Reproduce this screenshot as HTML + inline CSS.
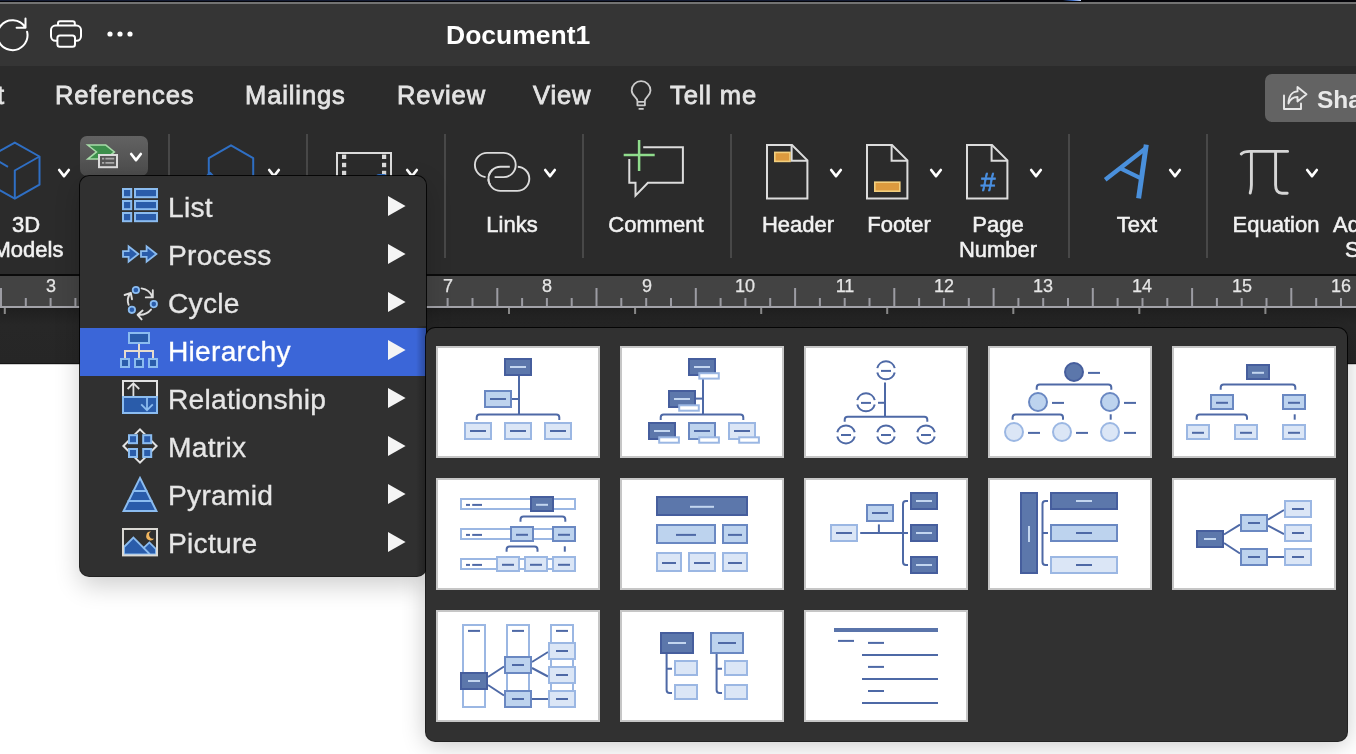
<!DOCTYPE html><html><head><meta charset="utf-8"><title>Document1</title><style>
*{margin:0;padding:0;box-sizing:border-box}
html,body{width:1356px;height:754px;overflow:hidden;background:#fff}
body{position:relative;font-family:"Liberation Sans", sans-serif}
.a{position:absolute}
.t{position:absolute;white-space:nowrap;will-change:transform}
.i{position:absolute;overflow:visible}
#titlebar{left:0;top:4px;width:1356px;height:62px;background:#353535}
#ribbon{left:0;top:66px;width:1356px;height:208px;background:#2b2b2b}
#ruler{left:0;top:276px;width:1356px;height:30px;background:#434343}
.sep{position:absolute;top:134px;width:2px;height:124px;background:#484848}
#menu{left:80px;top:176px;width:346px;height:400px;background:#303030;border-radius:9px;box-shadow:0 0 0 1px rgba(0,0,0,.85),0 9px 26px rgba(0,0,0,.2)}
#panelsh{left:426px;top:328px;width:920px;height:413px;border-radius:9px;box-shadow:0 3px 24px rgba(0,0,0,.24)}
#panel{left:426px;top:328px;width:920.5px;height:413px;background:#313131;border-radius:9px;box-shadow:0 0 0 1px rgba(0,0,0,.85)}
.th{position:absolute;width:164px;height:112px;background:#fff;border:2px solid #c6c6c6}
.th svg{position:absolute;left:-2px;top:-2px}
.d{fill:#5c77ab;stroke:#465e9d;stroke-width:2}
.m{fill:#bdd3ee;stroke:#6a88c2;stroke-width:2}
.l{fill:#dbe6f6;stroke:#9bb7e3;stroke-width:2}
.w{fill:#fff;stroke:#9bb7e3;stroke-width:2}
.ln{fill:none;stroke:#4e69a6;stroke-width:2}
.dl{fill:none;stroke:#c3d6ef;stroke-width:2}
.dd{fill:none;stroke:#4e69a6;stroke-width:2}
.chev{fill:none;stroke:#fff;stroke-width:2.7;stroke-linecap:round;stroke-linejoin:round}
</style></head><body>
<div class="a" style="left:0;top:0;width:1356px;height:2px;background:#05050a"></div>
<div class="a" style="left:0;top:0;width:1000px;height:1px;background:#141c33"></div>
<div class="a" style="left:1063px;top:0;width:17.5px;height:1px;background:linear-gradient(90deg,#05050a,#3b6fd0 55%,#cfe0ff)"></div>
<div class="a" style="left:0;top:2px;width:1356px;height:2px;background:#737373"></div>
<div id="titlebar" class="a"></div>
<svg class="i" style="left:0px;top:0px" width="150" height="65" viewBox="0 0 150 65" ><g fill="none" stroke="#fff" stroke-width="2" stroke-linecap="round" stroke-linejoin="round"><path d="M27.1 31.8A15 15 0 1 1 25.5 27.7M25.5 18.4V27.7H16.6"/><rect x="51" y="25.6" width="30" height="15.2" rx="4.5"/><path d="M58 25V23.2q0-2 2-2H72.8q2 0 2 2V25"/><rect x="57.4" y="35.4" width="17.6" height="11.4" rx="2.5" fill="#353535"/></g><circle cx="110" cy="34" r="2.6" fill="#fff"/><circle cx="120" cy="34" r="2.6" fill="#fff"/><circle cx="130" cy="34" r="2.6" fill="#fff"/></svg>
<div class="t" style="top:21.97px;font-size:26.5px;line-height:26.5px;color:#fff;font-weight:700;left:446px;">Document1</div>
<div id="ribbon" class="a"></div>
<div class="t" style="top:82.71px;font-size:25.5px;line-height:25.5px;color:#e4e4e4;-webkit-text-stroke:0.8px #e4e4e4;left:-596px;width:600px;text-align:right;">Insert</div>
<div class="t" style="top:82.71px;font-size:25.5px;line-height:25.5px;color:#e4e4e4;letter-spacing:0.9px;-webkit-text-stroke:0.8px #e4e4e4;left:54.6px;">References</div>
<div class="t" style="top:82.71px;font-size:25.5px;line-height:25.5px;color:#e4e4e4;letter-spacing:0.9px;-webkit-text-stroke:0.8px #e4e4e4;left:244.6px;">Mailings</div>
<div class="t" style="top:82.71px;font-size:25.5px;line-height:25.5px;color:#e4e4e4;letter-spacing:0.9px;-webkit-text-stroke:0.8px #e4e4e4;left:396.8px;">Review</div>
<div class="t" style="top:82.71px;font-size:25.5px;line-height:25.5px;color:#e4e4e4;letter-spacing:0.9px;-webkit-text-stroke:0.8px #e4e4e4;left:533px;">View</div>
<div class="t" style="top:82.71px;font-size:25.5px;line-height:25.5px;color:#e4e4e4;letter-spacing:0.9px;-webkit-text-stroke:0.8px #e4e4e4;left:670.3px;">Tell me</div>
<svg class="i" style="left:629px;top:79px" width="24" height="32" viewBox="0 0 24 32" ><g fill="none" stroke="#cbcbcb" stroke-width="1.8" stroke-linejoin="round"><path d="M8.4 26.3V21.8C8.4 18.4 2.7 16.8 2.7 11.5A9.4 9.4 0 0 1 21.5 11.5C21.5 16.8 15.9 18.4 15.9 21.8V26.3Z"/><path d="M8.4 22.9H15.9M9.6 29.8H14.7"/></g></svg>
<div class="a" style="left:1265px;top:74px;width:110px;height:48px;background:#636363;border-radius:7px"></div>
<svg class="i" style="left:1283px;top:86px" width="25" height="24" viewBox="0 0 25 24" ><g fill="none" stroke="#e8e8e8" stroke-width="1.9" stroke-linejoin="round" stroke-linecap="round"><path d="M1 9.5V23H18V17.5"/><path d="M14.5 1L23.5 8.2L14.5 15.4V11C9.5 11 7 13.5 5.5 17.5C5.5 10 9 5.6 14.5 5.4Z"/></g></svg>
<div class="t" style="top:87.76px;font-size:24.5px;line-height:24.5px;color:#e9e9e9;font-weight:700;left:1317.4px;">Share</div>
<div class="sep" style="left:168px"></div>
<div class="sep" style="left:306px"></div>
<div class="sep" style="left:444px"></div>
<div class="sep" style="left:582px"></div>
<div class="sep" style="left:730px"></div>
<div class="sep" style="left:1068px"></div>
<div class="sep" style="left:1206px"></div>
<svg class="i" style="left:0px;top:130px" width="44" height="72" viewBox="0 0 44 72" ><g fill="none" stroke="#2f6fc4" stroke-width="2" stroke-linejoin="round"><path d="M14.8 12.6L39.5 26.5V54.7L14.8 68.7L-9.9 54.7V26.5Z"/><path d="M39.5 26.5L14.8 40.5V68.7M-9.9 26.5L8 36.8"/></g></svg>
<svg class="i" style="left:56px;top:167.2px" width="16" height="12" viewBox="-8 -6 16 12"><path class="chev" d="M-4.8 -3L0 3.1L4.8 -3"/></svg>
<div class="t" style="top:214.18px;font-size:22px;line-height:22px;color:#f2f2f2;-webkit-text-stroke:0.55px #f2f2f2;left:-274px;width:600px;text-align:center;">3D</div>
<div class="t" style="top:238.68px;font-size:22px;line-height:22px;color:#f2f2f2;-webkit-text-stroke:0.55px #f2f2f2;left:-272.5px;width:600px;text-align:center;">Models</div>
<div class="a" style="left:80px;top:136px;width:68px;height:39.6px;border-radius:7px;background:linear-gradient(#626262,#4b4b4b)"></div>
<svg class="i" style="left:80px;top:136px" width="68" height="40" viewBox="0 0 68 40" ><path d="M7.7 9.1H25.8L34.4 15.9L25.8 23.1H7.7L16.5 15.9Z" fill="#3d8f4c" stroke="#a6dba8" stroke-width="1.5" stroke-linejoin="miter"/><rect x="19" y="19" width="18" height="12.2" fill="#565656" stroke="#dcdcdc" stroke-width="2"/><path d="M22 22.7h2.2M25.4 22.7h8.8M22 26.9h2.2M25.4 26.9h8.8" stroke="#a9a9a9" stroke-width="1.8"/></svg>
<svg class="i" style="left:128px;top:151.2px" width="16" height="12" viewBox="-8 -6 16 12"><path class="chev" d="M-4.8 -3L0 3.1L4.8 -3"/></svg>
<svg class="i" style="left:208px;top:143.7px" width="48" height="56" viewBox="0 0 48 56" ><g fill="none" stroke="#2f6fc4" stroke-width="2" stroke-linejoin="round"><path d="M23 1.3L45.2 14.2V40L23 53L0.8 40V14.2Z"/><path d="M-2.5 33.6L2 28.8L6.5 33.6Z"/></g></svg>
<svg class="i" style="left:266px;top:167.2px" width="16" height="12" viewBox="-8 -6 16 12"><path class="chev" d="M-4.8 -3L0 3.1L4.8 -3"/></svg>
<svg class="i" style="left:336px;top:152.2px" width="56" height="44" viewBox="0 0 56 44" ><rect x="1" y="1" width="54" height="40" fill="none" stroke="#dcdcdc" stroke-width="2"/><rect x="6" y="2.6" width="4.2" height="4.4" fill="#dcdcdc"/><rect x="46" y="2.6" width="4.2" height="4.4" fill="#dcdcdc"/><rect x="6" y="10.8" width="4.2" height="4.4" fill="#dcdcdc"/><rect x="46" y="10.8" width="4.2" height="4.4" fill="#dcdcdc"/><rect x="6" y="18.8" width="4.2" height="4.4" fill="#dcdcdc"/><rect x="46" y="18.8" width="4.2" height="4.4" fill="#dcdcdc"/><rect x="6" y="27" width="4.2" height="4.4" fill="#dcdcdc"/><rect x="46" y="27" width="4.2" height="4.4" fill="#dcdcdc"/><rect x="40" y="22" width="11" height="12" rx="3" fill="#2f6fc4"/></svg>
<svg class="i" style="left:404px;top:167.2px" width="16" height="12" viewBox="-8 -6 16 12"><path class="chev" d="M-4.8 -3L0 3.1L4.8 -3"/></svg>
<svg class="i" style="left:474px;top:152px" width="58" height="42" viewBox="0 0 58 42" ><g fill="none" stroke="#dcdcdc" stroke-width="1.9"><rect x="14.4" y="14.7" width="40.9" height="24.2" rx="12.1"/><path d="M35.8 14.7H43.8" stroke="#2b2b2b" stroke-width="3.4"/><rect x="0.9" y="0.9" width="40.8" height="24.2" rx="12.1"/><path d="M11.6 25.1H20.6" stroke="#2b2b2b" stroke-width="3.4"/><path d="M16.02 32.85A12.1 12.1 0 0 1 18.72 17.53"/></g></svg>
<svg class="i" style="left:542px;top:167.2px" width="16" height="12" viewBox="-8 -6 16 12"><path class="chev" d="M-4.8 -3L0 3.1L4.8 -3"/></svg>
<div class="t" style="top:214.18px;font-size:22px;line-height:22px;color:#f2f2f2;-webkit-text-stroke:0.55px #f2f2f2;left:212px;width:600px;text-align:center;">Links</div>
<svg class="i" style="left:620px;top:138px" width="66" height="62" viewBox="0 0 66 62" ><path d="M9.3 21V44.8H15.5V57.6L27.9 44.8H62.9V9.3H23.2" fill="none" stroke="#dcdcdc" stroke-width="2"/><path d="M3.7 17.1H34.7M19.1 1.9V32.9" stroke="#8fdc8c" stroke-width="2.5" fill="none"/></svg>
<div class="t" style="top:214.18px;font-size:22px;line-height:22px;color:#f2f2f2;-webkit-text-stroke:0.55px #f2f2f2;left:356px;width:600px;text-align:center;">Comment</div>
<svg class="i" style="left:766px;top:144px" width="43" height="56" viewBox="0 0 43 56" ><path d="M1 1H26L41.4 16.4V54.4H1Z" fill="none" stroke="#dcdcdc" stroke-width="2" stroke-linejoin="miter"/><path d="M25.6 1V16.8H41.4" fill="none" stroke="#dcdcdc" stroke-width="2"/><rect x="8.8" y="8.4" width="15.2" height="9" fill="#dc9a3e" stroke="#f2cf7e" stroke-width="1.6"/></svg>
<svg class="i" style="left:866px;top:144px" width="43" height="56" viewBox="0 0 43 56" ><path d="M1 1H26L41.4 16.4V54.4H1Z" fill="none" stroke="#dcdcdc" stroke-width="2" stroke-linejoin="miter"/><path d="M25.6 1V16.8H41.4" fill="none" stroke="#dcdcdc" stroke-width="2"/><rect x="8.8" y="38.2" width="25" height="9" fill="#dc9a3e" stroke="#f2cf7e" stroke-width="1.6"/></svg>
<svg class="i" style="left:966px;top:144px" width="43" height="56" viewBox="0 0 43 56" ><path d="M1 1H26L41.4 16.4V54.4H1Z" fill="none" stroke="#dcdcdc" stroke-width="2" stroke-linejoin="miter"/><path d="M25.6 1V16.8H41.4" fill="none" stroke="#dcdcdc" stroke-width="2"/></svg>
<div class="t" style="top:168.87px;font-size:26.5px;line-height:26.5px;color:#4a90e2;-webkit-text-stroke:0.7px #4a90e2;left:687.8px;width:600px;text-align:center;">#</div>
<svg class="i" style="left:828px;top:167.2px" width="16" height="12" viewBox="-8 -6 16 12"><path class="chev" d="M-4.8 -3L0 3.1L4.8 -3"/></svg>
<svg class="i" style="left:928px;top:167.2px" width="16" height="12" viewBox="-8 -6 16 12"><path class="chev" d="M-4.8 -3L0 3.1L4.8 -3"/></svg>
<svg class="i" style="left:1028px;top:167.2px" width="16" height="12" viewBox="-8 -6 16 12"><path class="chev" d="M-4.8 -3L0 3.1L4.8 -3"/></svg>
<div class="t" style="top:214.18px;font-size:22px;line-height:22px;color:#f2f2f2;-webkit-text-stroke:0.55px #f2f2f2;left:498px;width:600px;text-align:center;">Header</div>
<div class="t" style="top:214.18px;font-size:22px;line-height:22px;color:#f2f2f2;-webkit-text-stroke:0.55px #f2f2f2;left:598.5px;width:600px;text-align:center;">Footer</div>
<div class="t" style="top:214.18px;font-size:22px;line-height:22px;color:#f2f2f2;-webkit-text-stroke:0.55px #f2f2f2;left:698px;width:600px;text-align:center;">Page</div>
<div class="t" style="top:238.68px;font-size:22px;line-height:22px;color:#f2f2f2;-webkit-text-stroke:0.55px #f2f2f2;left:698px;width:600px;text-align:center;">Number</div>
<svg class="i" style="left:1102px;top:142px" width="50" height="60" viewBox="0 0 50 60" ><g stroke="#4a90dc" fill="none"><path d="M44.3 2.6L36.6 56.4" stroke-width="5"/><path d="M3.2 37.8L43.5 6.5" stroke-width="4.3"/><path d="M18.5 26.4L39.5 36.6" stroke-width="4"/></g></svg>
<svg class="i" style="left:1166.5px;top:167.2px" width="16" height="12" viewBox="-8 -6 16 12"><path class="chev" d="M-4.8 -3L0 3.1L4.8 -3"/></svg>
<div class="t" style="top:214.18px;font-size:22px;line-height:22px;color:#f2f2f2;-webkit-text-stroke:0.55px #f2f2f2;left:837px;width:600px;text-align:center;">Text</div>
<svg class="i" style="left:1240px;top:149px" width="50" height="47" viewBox="0 0 50 47" ><g fill="none" stroke="#d6d6d6" stroke-width="2.9" stroke-linecap="round"><path d="M1.2 5C3.5 2.4 6 2.4 10 2.4H47.6"/><path d="M11.4 2.6V36C11.4 40 10.8 42 10.2 44"/><path d="M35.6 2.6V36C35.6 42 38.4 44.2 42 44.2H47.2"/></g></svg>
<svg class="i" style="left:1304px;top:167.2px" width="16" height="12" viewBox="-8 -6 16 12"><path class="chev" d="M-4.8 -3L0 3.1L4.8 -3"/></svg>
<div class="t" style="top:214.18px;font-size:22px;line-height:22px;color:#f2f2f2;-webkit-text-stroke:0.55px #f2f2f2;left:976px;width:600px;text-align:center;">Equation</div>
<div class="t" style="top:214.18px;font-size:22px;line-height:22px;color:#f2f2f2;-webkit-text-stroke:0.55px #f2f2f2;left:1332.5px;">Advanced</div>
<div class="t" style="top:238.68px;font-size:22px;line-height:22px;color:#f2f2f2;-webkit-text-stroke:0.55px #f2f2f2;left:1344.5px;">Symbol</div>
<div class="a" style="left:0;top:274px;width:1356px;height:2px;background:#0b0b0b"></div>
<div id="ruler" class="a"></div>
<div class="a" style="left:0;top:306px;width:1356px;height:2px;background:#a2a2a8"></div>
<div class="a" style="left:0;top:308px;width:1356px;height:56px;background:linear-gradient(#1f1f1f,#272727 30%,#262626)"></div>
<div class="a" style="left:0;top:363px;width:1356px;height:1px;background:#161616"></div>
<div class="a" style="left:0;top:364px;width:1356px;height:1px;background:#cfcfcf"></div>
<svg class="i" style="left:0px;top:276px" width="1356" height="40" viewBox="0 0 1356 40" ><rect x="-0.0" y="12" width="2" height="18" fill="#9c9ca3"/><rect x="24.8" y="22" width="2" height="8" fill="#9c9ca3"/><rect x="49.6" y="22" width="2" height="8" fill="#9c9ca3"/><rect x="74.4" y="22" width="2" height="8" fill="#9c9ca3"/><rect x="99.2" y="12" width="2" height="18" fill="#9c9ca3"/><rect x="124.0" y="22" width="2" height="8" fill="#9c9ca3"/><rect x="148.9" y="22" width="2" height="8" fill="#9c9ca3"/><rect x="173.7" y="22" width="2" height="8" fill="#9c9ca3"/><rect x="198.5" y="12" width="2" height="18" fill="#9c9ca3"/><rect x="223.3" y="22" width="2" height="8" fill="#9c9ca3"/><rect x="248.1" y="22" width="2" height="8" fill="#9c9ca3"/><rect x="272.9" y="22" width="2" height="8" fill="#9c9ca3"/><rect x="297.8" y="12" width="2" height="18" fill="#9c9ca3"/><rect x="322.6" y="22" width="2" height="8" fill="#9c9ca3"/><rect x="347.4" y="22" width="2" height="8" fill="#9c9ca3"/><rect x="372.2" y="22" width="2" height="8" fill="#9c9ca3"/><rect x="397.0" y="12" width="2" height="18" fill="#9c9ca3"/><rect x="421.8" y="22" width="2" height="8" fill="#9c9ca3"/><rect x="446.6" y="22" width="2" height="8" fill="#9c9ca3"/><rect x="471.5" y="22" width="2" height="8" fill="#9c9ca3"/><rect x="496.3" y="12" width="2" height="18" fill="#9c9ca3"/><rect x="521.1" y="22" width="2" height="8" fill="#9c9ca3"/><rect x="545.9" y="22" width="2" height="8" fill="#9c9ca3"/><rect x="570.7" y="22" width="2" height="8" fill="#9c9ca3"/><rect x="595.5" y="12" width="2" height="18" fill="#9c9ca3"/><rect x="620.3" y="22" width="2" height="8" fill="#9c9ca3"/><rect x="645.2" y="22" width="2" height="8" fill="#9c9ca3"/><rect x="670.0" y="22" width="2" height="8" fill="#9c9ca3"/><rect x="694.8" y="12" width="2" height="18" fill="#9c9ca3"/><rect x="719.6" y="22" width="2" height="8" fill="#9c9ca3"/><rect x="744.4" y="22" width="2" height="8" fill="#9c9ca3"/><rect x="769.2" y="22" width="2" height="8" fill="#9c9ca3"/><rect x="794.1" y="12" width="2" height="18" fill="#9c9ca3"/><rect x="818.9" y="22" width="2" height="8" fill="#9c9ca3"/><rect x="843.7" y="22" width="2" height="8" fill="#9c9ca3"/><rect x="868.5" y="22" width="2" height="8" fill="#9c9ca3"/><rect x="893.3" y="12" width="2" height="18" fill="#9c9ca3"/><rect x="918.1" y="22" width="2" height="8" fill="#9c9ca3"/><rect x="942.9" y="22" width="2" height="8" fill="#9c9ca3"/><rect x="967.8" y="22" width="2" height="8" fill="#9c9ca3"/><rect x="992.6" y="12" width="2" height="18" fill="#9c9ca3"/><rect x="1017.4" y="22" width="2" height="8" fill="#9c9ca3"/><rect x="1042.2" y="22" width="2" height="8" fill="#9c9ca3"/><rect x="1067.0" y="22" width="2" height="8" fill="#9c9ca3"/><rect x="1091.8" y="12" width="2" height="18" fill="#9c9ca3"/><rect x="1116.6" y="22" width="2" height="8" fill="#9c9ca3"/><rect x="1141.5" y="22" width="2" height="8" fill="#9c9ca3"/><rect x="1166.3" y="22" width="2" height="8" fill="#9c9ca3"/><rect x="1191.1" y="12" width="2" height="18" fill="#9c9ca3"/><rect x="1215.9" y="22" width="2" height="8" fill="#9c9ca3"/><rect x="1240.7" y="22" width="2" height="8" fill="#9c9ca3"/><rect x="1265.5" y="22" width="2" height="8" fill="#9c9ca3"/><rect x="1290.3" y="12" width="2" height="18" fill="#9c9ca3"/><rect x="1315.2" y="22" width="2" height="8" fill="#9c9ca3"/><rect x="1340.0" y="22" width="2" height="8" fill="#9c9ca3"/><rect x="3.8" y="32" width="2" height="6" fill="#8a8a8a"/><rect x="129.9" y="32" width="2" height="6" fill="#8a8a8a"/><rect x="255.9" y="32" width="2" height="6" fill="#8a8a8a"/><rect x="382.0" y="32" width="2" height="6" fill="#8a8a8a"/><rect x="508.0" y="32" width="2" height="6" fill="#8a8a8a"/><rect x="634.1" y="32" width="2" height="6" fill="#8a8a8a"/><rect x="760.2" y="32" width="2" height="6" fill="#8a8a8a"/><rect x="886.2" y="32" width="2" height="6" fill="#8a8a8a"/><rect x="1012.3" y="32" width="2" height="6" fill="#8a8a8a"/><rect x="1138.3" y="32" width="2" height="6" fill="#8a8a8a"/><rect x="1264.4" y="32" width="2" height="6" fill="#8a8a8a"/></svg>
<div class="t" style="top:276.66px;font-size:18px;line-height:18px;color:#e6e6e6;-webkit-text-stroke:0.25px #e6e6e6;left:-248.9px;width:600px;text-align:center;">3</div>
<div class="t" style="top:276.66px;font-size:18px;line-height:18px;color:#e6e6e6;-webkit-text-stroke:0.25px #e6e6e6;left:-149.64px;width:600px;text-align:center;">4</div>
<div class="t" style="top:276.66px;font-size:18px;line-height:18px;color:#e6e6e6;-webkit-text-stroke:0.25px #e6e6e6;left:-50.379999999999995px;width:600px;text-align:center;">5</div>
<div class="t" style="top:276.66px;font-size:18px;line-height:18px;color:#e6e6e6;-webkit-text-stroke:0.25px #e6e6e6;left:48.88000000000005px;width:600px;text-align:center;">6</div>
<div class="t" style="top:276.66px;font-size:18px;line-height:18px;color:#e6e6e6;-webkit-text-stroke:0.25px #e6e6e6;left:148.14000000000004px;width:600px;text-align:center;">7</div>
<div class="t" style="top:276.66px;font-size:18px;line-height:18px;color:#e6e6e6;-webkit-text-stroke:0.25px #e6e6e6;left:247.39999999999998px;width:600px;text-align:center;">8</div>
<div class="t" style="top:276.66px;font-size:18px;line-height:18px;color:#e6e6e6;-webkit-text-stroke:0.25px #e6e6e6;left:346.6600000000001px;width:600px;text-align:center;">9</div>
<div class="t" style="top:276.66px;font-size:18px;line-height:18px;color:#e6e6e6;-webkit-text-stroke:0.25px #e6e6e6;left:445.4200000000001px;width:600px;text-align:center;">10</div>
<div class="t" style="top:276.66px;font-size:18px;line-height:18px;color:#e6e6e6;-webkit-text-stroke:0.25px #e6e6e6;left:544.6800000000001px;width:600px;text-align:center;">11</div>
<div class="t" style="top:276.66px;font-size:18px;line-height:18px;color:#e6e6e6;-webkit-text-stroke:0.25px #e6e6e6;left:643.94px;width:600px;text-align:center;">12</div>
<div class="t" style="top:276.66px;font-size:18px;line-height:18px;color:#e6e6e6;-webkit-text-stroke:0.25px #e6e6e6;left:743.2px;width:600px;text-align:center;">13</div>
<div class="t" style="top:276.66px;font-size:18px;line-height:18px;color:#e6e6e6;-webkit-text-stroke:0.25px #e6e6e6;left:842.46px;width:600px;text-align:center;">14</div>
<div class="t" style="top:276.66px;font-size:18px;line-height:18px;color:#e6e6e6;-webkit-text-stroke:0.25px #e6e6e6;left:941.72px;width:600px;text-align:center;">15</div>
<div class="t" style="top:276.66px;font-size:18px;line-height:18px;color:#e6e6e6;-webkit-text-stroke:0.25px #e6e6e6;left:1040.98px;width:600px;text-align:center;">16</div>
<div id="panelsh" class="a"></div>
<div id="menu" class="a">
<div class="a" style="left:0;top:152px;width:346px;height:48px;background:#3b66d8"></div>
<div class="a" style="left:336px;top:150px;width:10px;height:250px;background:linear-gradient(90deg,rgba(0,0,0,0),rgba(0,0,0,.28));border-radius:0 0 9px 0"></div>
</div>
<div class="t" style="top:193.13px;font-size:28.2px;line-height:28.2px;color:#e6e6e6;letter-spacing:0.25px;-webkit-text-stroke:0.32px #e6e6e6;left:168px;">List</div>
<svg class="i" style="left:388px;top:196px" width="18" height="20" viewBox="0 0 18 20"><path d="M0 0L17.6 10L0 20Z" fill="#f4f4f4"/></svg>
<div class="t" style="top:241.13px;font-size:28.2px;line-height:28.2px;color:#e6e6e6;letter-spacing:0.25px;-webkit-text-stroke:0.32px #e6e6e6;left:168px;">Process</div>
<svg class="i" style="left:388px;top:244px" width="18" height="20" viewBox="0 0 18 20"><path d="M0 0L17.6 10L0 20Z" fill="#f4f4f4"/></svg>
<div class="t" style="top:289.13px;font-size:28.2px;line-height:28.2px;color:#e6e6e6;letter-spacing:0.25px;-webkit-text-stroke:0.32px #e6e6e6;left:168px;">Cycle</div>
<svg class="i" style="left:388px;top:292px" width="18" height="20" viewBox="0 0 18 20"><path d="M0 0L17.6 10L0 20Z" fill="#f4f4f4"/></svg>
<div class="t" style="top:337.13px;font-size:28.2px;line-height:28.2px;color:#fff;letter-spacing:0.25px;-webkit-text-stroke:0.32px #fff;left:168px;">Hierarchy</div>
<svg class="i" style="left:388px;top:340px" width="18" height="20" viewBox="0 0 18 20"><path d="M0 0L17.6 10L0 20Z" fill="#f4f4f4"/></svg>
<div class="t" style="top:385.13px;font-size:28.2px;line-height:28.2px;color:#e6e6e6;letter-spacing:0.25px;-webkit-text-stroke:0.32px #e6e6e6;left:168px;">Relationship</div>
<svg class="i" style="left:388px;top:388px" width="18" height="20" viewBox="0 0 18 20"><path d="M0 0L17.6 10L0 20Z" fill="#f4f4f4"/></svg>
<div class="t" style="top:433.13px;font-size:28.2px;line-height:28.2px;color:#e6e6e6;letter-spacing:0.25px;-webkit-text-stroke:0.32px #e6e6e6;left:168px;">Matrix</div>
<svg class="i" style="left:388px;top:436px" width="18" height="20" viewBox="0 0 18 20"><path d="M0 0L17.6 10L0 20Z" fill="#f4f4f4"/></svg>
<div class="t" style="top:481.13px;font-size:28.2px;line-height:28.2px;color:#e6e6e6;letter-spacing:0.25px;-webkit-text-stroke:0.32px #e6e6e6;left:168px;">Pyramid</div>
<svg class="i" style="left:388px;top:484px" width="18" height="20" viewBox="0 0 18 20"><path d="M0 0L17.6 10L0 20Z" fill="#f4f4f4"/></svg>
<div class="t" style="top:529.13px;font-size:28.2px;line-height:28.2px;color:#e6e6e6;letter-spacing:0.25px;-webkit-text-stroke:0.32px #e6e6e6;left:168px;">Picture</div>
<svg class="i" style="left:388px;top:532px" width="18" height="20" viewBox="0 0 18 20"><path d="M0 0L17.6 10L0 20Z" fill="#f4f4f4"/></svg>
<div id="panel" class="a">
<div class="th" style="left:10px;top:18px"><svg width="164" height="112" viewBox="0 0 164 112"><path class="ln" d="M83 30V68.5"/><path class="ln" d="M40.7 74V71.5q0 -3 3 -3H120.3q3 0 3 3V74"/><path class="ln" d="M76 53H83"/><rect class="d" x="69" y="13" width="26" height="16"/><path class="dl" d="M74 21H90"/><rect class="m" x="49" y="45" width="26" height="16"/><path class="dd" d="M54 53H70"/><rect class="l" x="29" y="77" width="26" height="16"/><path class="dd" d="M34 85H50"/><rect class="l" x="69" y="77" width="26" height="16"/><path class="dd" d="M74 85H90"/><rect class="l" x="109" y="77" width="26" height="16"/><path class="dd" d="M114 85H130"/></svg></div>
<div class="th" style="left:194px;top:18px"><svg width="164" height="112" viewBox="0 0 164 112"><path class="ln" d="M83 30V68.5"/><path class="ln" d="M40.7 74V71.5q0 -3 3 -3H120.3q3 0 3 3V74"/><path class="ln" d="M76 52.6H83"/><rect class="d" x="69" y="13" width="26" height="16"/><path class="dl" d="M74 21H90"/><rect class="w" x="79.3" y="27.2" width="19.5" height="5.4"/><rect class="d" x="49" y="45" width="26" height="16"/><path class="dl" d="M54 53H70"/><rect class="w" x="59.2" y="59.3" width="19.6" height="5.4"/><rect class="d" x="29" y="77" width="26" height="16"/><path class="dl" d="M34 85H50"/><rect class="w" x="39.2" y="91.3" width="19.7" height="5.4"/><rect class="m" x="69" y="77" width="26" height="16"/><path class="dd" d="M74 85H90"/><rect class="w" x="79.2" y="91.3" width="19.7" height="5.4"/><rect class="l" x="109" y="77" width="26" height="16"/><path class="dd" d="M114 85H130"/><rect class="w" x="119.2" y="91.3" width="19.7" height="5.4"/></svg></div>
<div class="th" style="left:378px;top:18px"><svg width="164" height="112" viewBox="0 0 164 112"><path class="ln" d="M81 36.4V70.8"/><path class="ln" d="M40.7 75.8V73.8q0 -3 3 -3H120.3q3 0 3 3V75.8"/><path class="ln" d="M74 56.8H81"/><path class="ln" d="M73.27 22.12A9 9 0 0 1 90.73 22.12M73.27 26.48A9 9 0 0 0 90.73 26.48"/><path class="ln" d="M77 24.9H87"/><path class="ln" d="M53.27 54.12A9 9 0 0 1 70.73 54.12M53.27 58.48A9 9 0 0 0 70.73 58.48"/><path class="ln" d="M57 56.9H67"/><path class="ln" d="M33.27 86.22A9 9 0 0 1 50.73 86.22M33.27 90.58A9 9 0 0 0 50.73 90.58"/><path class="ln" d="M37 89H47"/><path class="ln" d="M73.27 86.22A9 9 0 0 1 90.73 86.22M73.27 90.58A9 9 0 0 0 90.73 90.58"/><path class="ln" d="M77 89H87"/><path class="ln" d="M113.27 86.22A9 9 0 0 1 130.73 86.22M113.27 90.58A9 9 0 0 0 130.73 90.58"/><path class="ln" d="M117 89H127"/></svg></div>
<div class="th" style="left:562px;top:18px"><svg width="164" height="112" viewBox="0 0 164 112"><path class="ln" d="M48.7 43.8V41.6q0 -3 3 -3H120.3q3 0 3 3V43.8"/><path class="ln" d="M24.6 73.7V71.5q0 -3 3 -3H72q3 0 3 3V73.7"/><path class="ln" d="M122.7 68.3V73.7"/><circle class="d" cx="86" cy="26" r="9"/><path class="dd" d="M100 26.9H112"/><circle class="m" cx="50" cy="56" r="9"/><path class="dd" d="M64 56.9H76"/><circle class="m" cx="122" cy="56" r="9"/><path class="dd" d="M136 56.9H148"/><circle class="l" cx="26" cy="86" r="9"/><path class="dd" d="M40 86.9H52"/><circle class="l" cx="74" cy="86" r="9"/><path class="dd" d="M88 86.9H100"/><circle class="l" cx="122" cy="86" r="9"/><path class="dd" d="M136 86.9H148"/></svg></div>
<div class="th" style="left:746px;top:18px"><svg width="164" height="112" viewBox="0 0 164 112"><path class="ln" d="M48.7 43.8V41.6q0 -3 3 -3H120.3q3 0 3 3V43.8"/><path class="ln" d="M24.6 73.7V71.5q0 -3 3 -3H72q3 0 3 3V73.7"/><path class="ln" d="M122.7 68.3V73.7"/><rect class="d" x="75" y="19" width="22" height="14"/><path class="dl" d="M80 26.8H92"/><rect class="m" x="39" y="49" width="22" height="14"/><path class="dd" d="M44 56.8H56"/><rect class="m" x="111" y="49" width="22" height="14"/><path class="dd" d="M116 56.8H128"/><rect class="l" x="15" y="79" width="22" height="14"/><path class="dd" d="M20 86.8H32"/><rect class="l" x="63" y="79" width="22" height="14"/><path class="dd" d="M68 86.8H80"/><rect class="l" x="111" y="79" width="22" height="14"/><path class="dd" d="M116 86.8H128"/></svg></div>
<div class="th" style="left:10px;top:150px"><svg width="164" height="112" viewBox="0 0 164 112"><rect class="w" x="25" y="21" width="114" height="10"/><path class="dd" d="M30 26.9H34"/><path class="dd" d="M36.2 26.9H46"/><rect class="w" x="25" y="51" width="114" height="10"/><path class="dd" d="M30 56.9H34"/><path class="dd" d="M36.2 56.9H46"/><rect class="w" x="25" y="81" width="114" height="10"/><path class="dd" d="M30 86.9H34"/><path class="dd" d="M36.2 86.9H46"/><path class="ln" d="M84.5 43.8V41.6q0 -3 3 -3H126.3q3 0 3 3V43.8"/><path class="ln" d="M70.6 73.7V71.5q0 -3 3 -3H98.5q3 0 3 3V73.7"/><path class="ln" d="M128.8 68.3V73.7"/><rect class="d" x="95" y="19" width="22" height="14"/><path class="dl" d="M100 26.8H112"/><rect class="m" x="75" y="49" width="22" height="14"/><path class="dd" d="M80 56.8H92"/><rect class="m" x="117" y="49" width="22" height="14"/><path class="dd" d="M122 56.8H134"/><rect class="l" x="61" y="79" width="22" height="14"/><path class="dd" d="M66 86.8H78"/><rect class="l" x="89" y="79" width="22" height="14"/><path class="dd" d="M94 86.8H106"/><rect class="l" x="117" y="79" width="22" height="14"/><path class="dd" d="M122 86.8H134"/></svg></div>
<div class="th" style="left:194px;top:150px"><svg width="164" height="112" viewBox="0 0 164 112"><rect class="d" x="37" y="19" width="90" height="18"/><path class="dl" d="M70 28.8H94"/><rect class="m" x="37" y="47" width="58" height="18"/><path class="dd" d="M56 56.9H76"/><rect class="m" x="103" y="47" width="24" height="18"/><path class="dd" d="M108 56.9H122"/><rect class="l" x="37" y="75" width="24" height="18"/><path class="dd" d="M42 85H56"/><rect class="l" x="69" y="75" width="26" height="18"/><path class="dd" d="M74 85H90"/><rect class="l" x="103" y="75" width="24" height="18"/><path class="dd" d="M108 85H122"/></svg></div>
<div class="th" style="left:378px;top:150px"><svg width="164" height="112" viewBox="0 0 164 112"><path class="ln" d="M56.2 54.9H104"/><path class="ln" d="M74.9 46.4V54.9"/><path class="ln" d="M104 23h-2q-3 0 -3 3V84q0 3 3 3h2"/><rect class="l" x="27" y="47" width="26" height="16"/><path class="dd" d="M32 55H48"/><rect class="m" x="63" y="27" width="26" height="16"/><path class="dd" d="M68 35H84"/><rect class="d" x="107" y="15" width="26" height="16"/><path class="dl" d="M112 23H128"/><rect class="d" x="107" y="47" width="26" height="16"/><path class="dl" d="M112 55H128"/><rect class="d" x="107" y="79" width="26" height="16"/><path class="dl" d="M112 87H128"/></svg></div>
<div class="th" style="left:562px;top:150px"><svg width="164" height="112" viewBox="0 0 164 112"><rect class="d" x="33" y="15" width="16" height="80"/><path class="dl" d="M41 48V64"/><path class="ln" d="M60 23h-2.5q-3 0 -3 3V84q0 3 3 3h2.5M54.5 54.9h5.5"/><rect class="d" x="63" y="15" width="66" height="16"/><path class="dl" d="M88 23H104"/><rect class="m" x="63" y="47" width="66" height="16"/><path class="dd" d="M88 55H104"/><rect class="l" x="63" y="79" width="66" height="16"/><path class="dd" d="M88 87H104"/></svg></div>
<div class="th" style="left:746px;top:150px"><svg width="164" height="112" viewBox="0 0 164 112"><path class="ln" d="M52 56.5L68 46.6M52 65L68 75.5M96 41.6L112 32M96 47.6L112 56.1M96 78.9H112"/><rect class="d" x="25" y="53" width="26" height="16"/><path class="dl" d="M32 61H44"/><rect class="m" x="69" y="37" width="26" height="16"/><path class="dd" d="M76 45H88"/><rect class="m" x="69" y="71" width="26" height="16"/><path class="dd" d="M76 79H88"/><rect class="l" x="113" y="23" width="26" height="16"/><path class="dd" d="M120 31H132"/><rect class="l" x="113" y="47" width="26" height="16"/><path class="dd" d="M120 55H132"/><rect class="l" x="113" y="71" width="26" height="16"/><path class="dd" d="M120 79H132"/></svg></div>
<div class="th" style="left:10px;top:282px"><svg width="164" height="112" viewBox="0 0 164 112"><rect class="w" x="27" y="15" width="22" height="82"/><path class="dd" d="M32 20.9H44"/><rect class="w" x="71" y="15" width="22" height="82"/><path class="dd" d="M76 20.9H88"/><rect class="w" x="115" y="15" width="22" height="82"/><path class="dd" d="M120 20.9H132"/><path class="ln" d="M52 67L68 56.5M52 75L68 85.5M96 52L112 42M96 58L112 66.5M96 89H112"/><rect class="d" x="25" y="63" width="26" height="16"/><path class="dl" d="M32 71H44"/><rect class="m" x="69" y="47" width="26" height="16"/><path class="dd" d="M76 55H88"/><rect class="m" x="69" y="81" width="26" height="16"/><path class="dd" d="M76 89H88"/><rect class="l" x="113" y="33" width="26" height="16"/><path class="dd" d="M120 41H132"/><rect class="l" x="113" y="57" width="26" height="16"/><path class="dd" d="M120 65H132"/><rect class="l" x="113" y="81" width="26" height="16"/><path class="dd" d="M120 89H132"/></svg></div>
<div class="th" style="left:194px;top:282px"><svg width="164" height="112" viewBox="0 0 164 112"><path class="ln" d="M46.6 43V80q0 3 3 3h2.4M46.6 58.8h5.4"/><rect class="d" x="41" y="23" width="32" height="20"/><path class="dl" d="M48 33H66"/><rect class="l" x="55" y="51" width="22" height="14"/><rect class="l" x="55" y="75" width="22" height="14"/><path class="ln" d="M96.6 43V80q0 3 3 3h2.4M96.6 58.8h5.4"/><rect class="m" x="91" y="23" width="32" height="20"/><path class="dd" d="M98 33H116"/><rect class="l" x="105" y="51" width="22" height="14"/><rect class="l" x="105" y="75" width="22" height="14"/></svg></div>
<div class="th" style="left:378px;top:282px"><svg width="164" height="112" viewBox="0 0 164 112"><rect x="30" y="18" width="104" height="4" fill="#5a74aa"/><path class="dd" d="M34 30.9H50"/><path class="dd" d="M64 32.9H80"/><path class="dd" d="M64 56.9H80"/><path class="dd" d="M64 81H80"/><path class="dd" d="M58 44.9H134"/><path class="dd" d="M58 68.9H134"/><path class="dd" d="M58 92.9H134"/></svg></div>
</div>
<svg class="i" style="left:122px;top:188px" width="36" height="36" viewBox="0 0 36 36" ><rect x="1" y="1" width="8.2" height="8.2" fill="#2a5caa" stroke="#8bbcf0" stroke-width="2"/><rect x="13" y="1" width="22" height="8.2" fill="#2a5caa" stroke="#8bbcf0" stroke-width="2"/><rect x="1" y="13" width="8.2" height="8.2" fill="#2a5caa" stroke="#8bbcf0" stroke-width="2"/><rect x="13" y="13" width="22" height="8.2" fill="#2a5caa" stroke="#8bbcf0" stroke-width="2"/><rect x="1" y="25" width="8.2" height="8.2" fill="#2a5caa" stroke="#8bbcf0" stroke-width="2"/><rect x="13" y="25" width="22" height="8.2" fill="#2a5caa" stroke="#8bbcf0" stroke-width="2"/></svg>
<svg class="i" style="left:122px;top:244px" width="36" height="20" viewBox="0 0 36 20" ><path d="M1 7.2H6.6V2.4L16.4 10L6.6 17.6V12.8H1Z" fill="#2a5caa" stroke="#8bbcf0" stroke-width="1.8" stroke-linejoin="miter"/><path d="M19 7.2H24.6V2.4L34.4 10L24.6 17.6V12.8H19Z" fill="#2a5caa" stroke="#8bbcf0" stroke-width="1.8" stroke-linejoin="miter"/></svg>
<svg class="i" style="left:124px;top:286px" width="36" height="36" viewBox="0 0 36 36" ><g fill="none" stroke="#dedede" stroke-width="1.9" stroke-linecap="round" stroke-linejoin="round"><path d="M17.6 2.4Q25.6 3.6 28.6 11.2M28.8 4.2V11.4H21.8"/><path d="M27 23.6Q22 29.6 14 28.6M18.6 24.6L13.6 28.8L17.6 33.4"/><path d="M4.6 18.8Q2.4 12.6 6.2 7.4M0.6 9L6.8 6.8L8 13.2"/></g><circle cx="11.9" cy="4" r="3.2" fill="#2a5caa" stroke="#8bbcf0" stroke-width="1.8"/><circle cx="29.8" cy="18.1" r="3.2" fill="#2a5caa" stroke="#8bbcf0" stroke-width="1.8"/><circle cx="7.9" cy="23.8" r="3.2" fill="#2a5caa" stroke="#8bbcf0" stroke-width="1.8"/></svg>
<svg class="i" style="left:120px;top:332px" width="38" height="36" viewBox="0 0 38 36" ><path d="M19 12V26M5 26V19H33V26" fill="none" stroke="#e6dccd" stroke-width="2"/><rect x="9" y="1" width="20" height="10" fill="#2a5caa" stroke="#8bbcf0" stroke-width="2"/><rect x="1" y="27" width="8" height="8" fill="#2a5caa" stroke="#8bbcf0" stroke-width="2"/><rect x="15" y="27" width="8" height="8" fill="#2a5caa" stroke="#8bbcf0" stroke-width="2"/><rect x="29" y="27" width="8" height="8" fill="#2a5caa" stroke="#8bbcf0" stroke-width="2"/></svg>
<svg class="i" style="left:122px;top:380px" width="36" height="34" viewBox="0 0 36 34" ><rect x="1" y="1" width="34" height="16" fill="none" stroke="#e2e2e2" stroke-width="2"/><rect x="1" y="17" width="34" height="16" fill="#2a5caa" stroke="#8bbcf0" stroke-width="2"/><path d="M11.4 16V3.4M5.6 9L11.4 3.2L17.2 9" fill="none" stroke="#e2e2e2" stroke-width="1.8"/><path d="M25 17V30M19.2 24.4L25 30.2L30.8 24.4" fill="none" stroke="#8bbcf0" stroke-width="1.8"/></svg>
<svg class="i" style="left:122px;top:428px" width="36" height="36" viewBox="0 0 36 36" ><path d="M18 1.4L34.6 18L18 34.6L1.4 18Z" fill="none" stroke="#e2e2e2" stroke-width="2" stroke-linejoin="miter"/><rect x="6" y="6" width="24" height="24" fill="#303030"/><rect x="7" y="7.2" width="8" height="8" fill="#2a5caa" stroke="#8bbcf0" stroke-width="2"/><rect x="7" y="21" width="8" height="8" fill="#2a5caa" stroke="#8bbcf0" stroke-width="2"/><rect x="21.2" y="7.2" width="8" height="8" fill="#2a5caa" stroke="#8bbcf0" stroke-width="2"/><rect x="21.2" y="21" width="8" height="8" fill="#2a5caa" stroke="#8bbcf0" stroke-width="2"/></svg>
<svg class="i" style="left:122px;top:476px" width="36" height="36" viewBox="0 0 36 36" ><path d="M18 1.9L34.4 35H1.6Z" fill="#2a5caa" stroke="#8bbcf0" stroke-width="2" stroke-linejoin="miter"/><path d="M10.6 15H25.4M5.6 25H30.4" stroke="#8bbcf0" stroke-width="2"/></svg>
<svg class="i" style="left:122px;top:528px" width="36" height="30" viewBox="0 0 36 30" ><path d="M2 19L11.4 9.6L28 26.4H2ZM21.6 20L27.4 14.4L34 21V26.4H28Z" fill="#2a5caa" stroke="#8bbcf0" stroke-width="1.8" stroke-linejoin="miter"/><path d="M28.99 3.62A4.4 4.4 0 1 0 32.25 10.45A3.8 3.8 0 0 1 28.99 3.62Z" fill="#f0b45e"/><rect x="1" y="1" width="34" height="26.4" fill="none" stroke="#dbd9d4" stroke-width="2"/></svg>
</body></html>
